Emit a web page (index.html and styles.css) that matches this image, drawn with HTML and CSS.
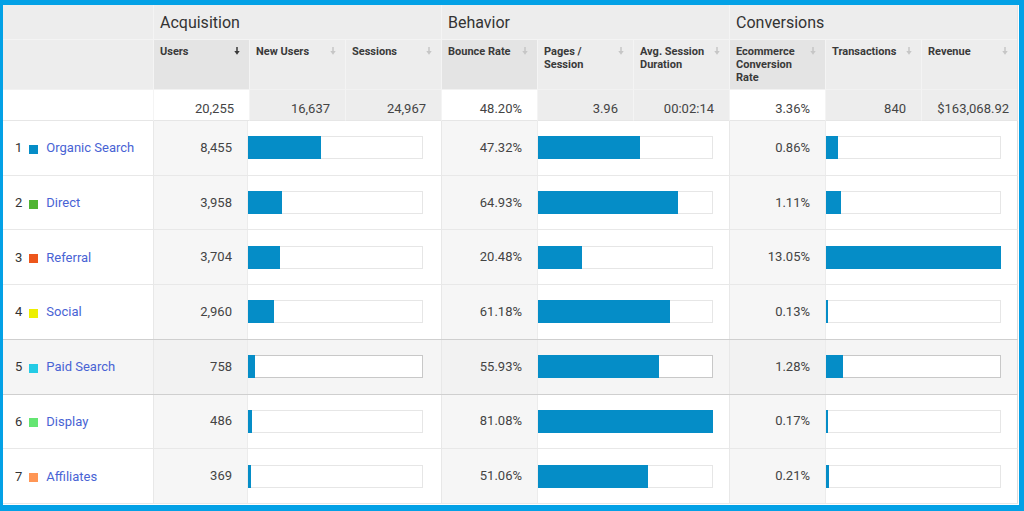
FILE: index.html
```html
<!DOCTYPE html>
<html>
<head>
<meta charset="utf-8">
<link rel="stylesheet" href="styles.css">
</head>
<body>
<div class="frame">
  <div class="report">
    <div class="head">
      <div class="hblank"></div>
      <div class="group">Acquisition</div>
      <div class="group">Behavior</div>
      <div class="group">Conversions</div>

      <div class="sub blank"></div>
      <div class="sub key"><span>Users</span><svg class="arr dark" viewBox="0 0 6 8" width="6" height="8"><path d="M3 0v5" stroke="currentColor" stroke-width="1.5"/><path d="M0.3 4h5.4L3 7.8z" fill="currentColor"/></svg></div>
      <div class="sub"><span>New Users</span><svg class="arr" viewBox="0 0 6 8" width="6" height="8"><path d="M3 0v5" stroke="currentColor" stroke-width="1.5"/><path d="M0.3 4h5.4L3 7.8z" fill="currentColor"/></svg></div>
      <div class="sub"><span>Sessions</span><svg class="arr" viewBox="0 0 6 8" width="6" height="8"><path d="M3 0v5" stroke="currentColor" stroke-width="1.5"/><path d="M0.3 4h5.4L3 7.8z" fill="currentColor"/></svg></div>
      <div class="sub key"><span>Bounce Rate</span><svg class="arr" viewBox="0 0 6 8" width="6" height="8"><path d="M3 0v5" stroke="currentColor" stroke-width="1.5"/><path d="M0.3 4h5.4L3 7.8z" fill="currentColor"/></svg></div>
      <div class="sub"><span>Pages / Session</span><svg class="arr" viewBox="0 0 6 8" width="6" height="8"><path d="M3 0v5" stroke="currentColor" stroke-width="1.5"/><path d="M0.3 4h5.4L3 7.8z" fill="currentColor"/></svg></div>
      <div class="sub"><span>Avg. Session Duration</span><svg class="arr" viewBox="0 0 6 8" width="6" height="8"><path d="M3 0v5" stroke="currentColor" stroke-width="1.5"/><path d="M0.3 4h5.4L3 7.8z" fill="currentColor"/></svg></div>
      <div class="sub key"><span>Ecommerce Conversion Rate</span><svg class="arr" viewBox="0 0 6 8" width="6" height="8"><path d="M3 0v5" stroke="currentColor" stroke-width="1.5"/><path d="M0.3 4h5.4L3 7.8z" fill="currentColor"/></svg></div>
      <div class="sub"><span>Transactions</span><svg class="arr" viewBox="0 0 6 8" width="6" height="8"><path d="M3 0v5" stroke="currentColor" stroke-width="1.5"/><path d="M0.3 4h5.4L3 7.8z" fill="currentColor"/></svg></div>
      <div class="sub"><span>Revenue</span><svg class="arr" viewBox="0 0 6 8" width="6" height="8"><path d="M3 0v5" stroke="currentColor" stroke-width="1.5"/><path d="M0.3 4h5.4L3 7.8z" fill="currentColor"/></svg></div>

      <div class="tot white"></div>
      <div class="tot white">20,255</div>
      <div class="tot">16,637</div>
      <div class="tot">24,967</div>
      <div class="tot white">48.20%</div>
      <div class="tot">3.96</div>
      <div class="tot">00:02:14</div>
      <div class="tot white">3.36%</div>
      <div class="tot">840</div>
      <div class="tot">$163,068.92</div>
    </div>

    <div class="rows">
      <div class="row">
        <div class="dim"><span class="idx">1</span><span class="sw c1"></span><span class="lbl">Organic Search</span></div>
        <div class="metric">8,455</div>
        <div class="barcell"><div class="bar"><div class="fill" style="width:41.74%"></div></div></div>
        <div class="metric">47.32%</div>
        <div class="barcell"><div class="bar"><div class="fill" style="width:58.36%"></div></div></div>
        <div class="metric">0.86%</div>
        <div class="barcell"><div class="bar"><div class="fill" style="width:6.59%"></div></div></div>
      </div>
      <div class="row">
        <div class="dim"><span class="idx">2</span><span class="sw c2"></span><span class="lbl">Direct</span></div>
        <div class="metric">3,958</div>
        <div class="barcell"><div class="bar"><div class="fill" style="width:19.54%"></div></div></div>
        <div class="metric">64.93%</div>
        <div class="barcell"><div class="bar"><div class="fill" style="width:80.08%"></div></div></div>
        <div class="metric">1.11%</div>
        <div class="barcell"><div class="bar"><div class="fill" style="width:8.51%"></div></div></div>
      </div>
      <div class="row">
        <div class="dim"><span class="idx">3</span><span class="sw c3"></span><span class="lbl">Referral</span></div>
        <div class="metric">3,704</div>
        <div class="barcell"><div class="bar"><div class="fill" style="width:18.29%"></div></div></div>
        <div class="metric">20.48%</div>
        <div class="barcell"><div class="bar"><div class="fill" style="width:25.26%"></div></div></div>
        <div class="metric">13.05%</div>
        <div class="barcell"><div class="bar"><div class="fill" style="width:100%"></div></div></div>
      </div>
      <div class="row">
        <div class="dim"><span class="idx">4</span><span class="sw c4"></span><span class="lbl">Social</span></div>
        <div class="metric">2,960</div>
        <div class="barcell"><div class="bar"><div class="fill" style="width:14.61%"></div></div></div>
        <div class="metric">61.18%</div>
        <div class="barcell"><div class="bar"><div class="fill" style="width:75.46%"></div></div></div>
        <div class="metric">0.13%</div>
        <div class="barcell"><div class="bar"><div class="fill" style="width:1%"></div></div></div>
      </div>
      <div class="row hl">
        <div class="dim"><span class="idx">5</span><span class="sw c5"></span><span class="lbl">Paid Search</span></div>
        <div class="metric">758</div>
        <div class="barcell"><div class="bar"><div class="fill" style="width:3.74%"></div></div></div>
        <div class="metric">55.93%</div>
        <div class="barcell"><div class="bar"><div class="fill" style="width:68.98%"></div></div></div>
        <div class="metric">1.28%</div>
        <div class="barcell"><div class="bar"><div class="fill" style="width:9.81%"></div></div></div>
      </div>
      <div class="row">
        <div class="dim"><span class="idx">6</span><span class="sw c6"></span><span class="lbl">Display</span></div>
        <div class="metric">486</div>
        <div class="barcell"><div class="bar"><div class="fill" style="width:2.4%"></div></div></div>
        <div class="metric">81.08%</div>
        <div class="barcell"><div class="bar"><div class="fill" style="width:100%"></div></div></div>
        <div class="metric">0.17%</div>
        <div class="barcell"><div class="bar"><div class="fill" style="width:1.3%"></div></div></div>
      </div>
      <div class="row">
        <div class="dim"><span class="idx">7</span><span class="sw c7"></span><span class="lbl">Affiliates</span></div>
        <div class="metric">369</div>
        <div class="barcell"><div class="bar"><div class="fill" style="width:1.82%"></div></div></div>
        <div class="metric">51.06%</div>
        <div class="barcell"><div class="bar"><div class="fill" style="width:62.97%"></div></div></div>
        <div class="metric">0.21%</div>
        <div class="barcell"><div class="bar"><div class="fill" style="width:1.61%"></div></div></div>
      </div>
    </div>
  </div>
</div>
</body>
</html>
```

FILE: styles.css
```css
html, body {
  margin: 0;
  padding: 0;
}
body {
  background: #03a1e6;
  font-family: Roboto, "Liberation Sans", Arial, sans-serif;
  overflow: hidden;
}
.frame {
  box-sizing: border-box;
  width: 1024px;
  height: 511px;
  padding: 5px 5px 6px 3px;
}
.report {
  background: #fff;
  width: 1016px;
  height: 500px;
  overflow: hidden;
}
.head {
  display: grid;
  grid-template-columns: 151px repeat(8, 96px) 95px;
  grid-template-rows: 35px 50px 31px;
  width: 1015px;
  box-sizing: border-box;
  border-right: 1px solid #e3e3e3;
}
.hblank {
  background: #ededed;
  border-right: 1px solid #f4f4f4;
  border-bottom: 1px solid #f4f4f4;
}
.group {
  grid-column: span 3;
  background: #ededed;
  border-right: 1px solid #f4f4f4;
  border-bottom: 1px solid #f4f4f4;
  font-size: 16px;
  line-height: 20px;
  color: #333;
  padding: 8px 0 0 6px;
}
.group:nth-child(4) {
  border-right: none;
}
.sub {
  background: #ededed;
  border-right: 1px solid #f4f4f4;
  border-bottom: 1px solid #f2f2f2;
  padding: 5px 9px 0 6px;
  display: flex;
  justify-content: space-between;
  align-items: flex-start;
  gap: 4px;
  font-size: 11px;
  line-height: 13px;
  font-weight: 700;
  color: #3a3a3a;
}
.sub:nth-child(14) {
  border-right: none;
}
.sub.key {
  background: #e4e4e4;
}
.arr {
  flex: none;
  margin-top: 2px;
  color: #c6c6c6;
}
.arr.dark {
  color: #3a3a3a;
}
.tot {
  background: #ededed;
  border-right: 1px solid #f4f4f4;
  border-bottom: 1px solid #e6e6e6;
  display: flex;
  justify-content: flex-end;
  align-items: flex-end;
  padding: 0 15px 4px 0;
  font-size: 13px;
  line-height: 15px;
  color: #444;
}
.tot:last-child {
  border-right: none;
  padding-right: 8px;
}
.tot.white {
  background: #fff;
}
.rows {
  width: 1015px;
}
.row {
  display: grid;
  grid-template-columns: 151px 94px 194px 96px 192px 96px 191px;
  box-sizing: border-box;
  height: calc(383px / 7);
  border-bottom: 1px solid #e8e8e8;
  border-right: 1px solid #dcdcdc;
  background: #fff;
  font-size: 13px;
  line-height: 15px;
}
.row.hl {
  background: #f5f5f5;
  border-bottom-color: #cfcfcf;
  box-shadow: 0 -1px 0 #cfcfcf;
}
.dim {
  display: flex;
  align-items: center;
  padding: 0 0 0 12px;
  border-right: 1px solid #e8e8e8;
}
.idx {
  color: #333;
  margin-right: 7px;
}
.sw {
  width: 9px;
  height: 9px;
  margin: 3px 8px 0 0;
  flex: none;
}
.c1 { background: #058dc7; }
.c2 { background: #50b432; }
.c3 { background: #ed561b; }
.c4 { background: #edef00; }
.c5 { background: #24cbe5; }
.c6 { background: #64e572; }
.c7 { background: #ff9655; }
.lbl {
  color: #4863d4;
}
.metric {
  background: #f6f6f6;
  border-right: 1px solid #ececec;
  display: flex;
  align-items: center;
  justify-content: flex-end;
  padding: 0 15px 1px 0;
  color: #444;
}
.hl .metric {
  background: #f2f2f2;
}
.barcell {
  display: flex;
  align-items: center;
  border-right: 1px solid #e8e8e8;
}
.barcell:last-child {
  border-right: none;
}
.bar {
  width: 175px;
  height: 23px;
  background: #fff;
  box-shadow: inset 0 0 0 1px #e6e6e6;
  display: flex;
}
.hl .bar {
  box-shadow: inset 0 0 0 1px #c8c8c8;
}
.fill {
  height: 100%;
  background: #058dc7;
}
```
